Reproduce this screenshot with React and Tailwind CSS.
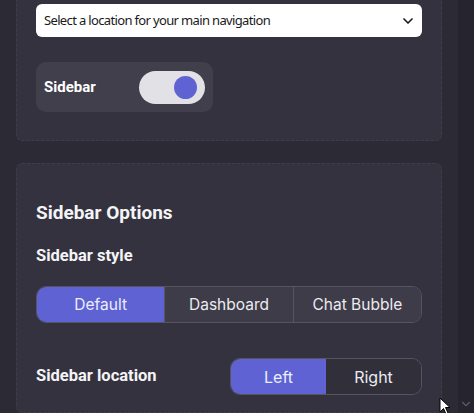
import { ChevronDown } from 'lucide-react';

function Segmented({ options, active, className }) {
    return (
        <div className={`flex overflow-hidden rounded-[10px] border border-[#55545f] ${className}`}>
            {options.map((opt, i) => (
                <div
                    key={opt}
                    className={`flex flex-1 items-center justify-center text-[15.5px] ${
                        i === active
                            ? 'bg-[#5f62d3] text-[#eceefb]'
                            : 'bg-[#3d3c48] text-[#ecebf0]'
                    } ${i > 0 ? 'border-l border-[#55545f]' : ''}`}
                >
                    {opt}
                </div>
            ))}
        </div>
    );
}

export default function App() {
    return (
        <div className="relative flex h-[413px] w-[474px] overflow-hidden bg-[#2b2a35] font-['Inter',sans-serif]">
            <div className="flex flex-1 flex-col px-4">
                {/* Navigation card */}
                <div className="-mt-4 rounded-md border border-dashed border-[#3e3d49] bg-[#33323e] px-[19px] pb-[28px] pt-[19px]">
                    <div className="flex h-[33px] items-center justify-between rounded-md bg-white pl-2 pr-[6px] font-['Noto_Sans',sans-serif] text-[13px] tracking-[-0.65px] text-[#1a1a1a]">
                        <span>Select a location for your main navigation</span>
                        <ChevronDown className="h-4 w-4" strokeWidth={2.5} />
                    </div>
                    <div className="mt-[25px] flex h-[50px] w-[177px] items-center justify-between rounded-[10px] bg-[#403f4b] pl-2 pr-2">
                        <span className="font-['Roboto',sans-serif] text-[15px] font-bold text-white">Sidebar</span>
                        <div className="flex h-[33px] w-[66px] items-center justify-end rounded-full bg-[#e2e1e5] pr-[8px]">
                            <div className="h-[23px] w-[23px] rounded-full bg-[#5f62d3]" />
                        </div>
                    </div>
                </div>

                {/* Sidebar options card */}
                <div className="mt-[22px] flex-1 rounded-md border border-dashed border-[#3e3d49] bg-[#33323e] px-[19px] pt-[38px] font-['Roboto',sans-serif]">
                    <h2 className="text-[19px] font-bold leading-[22px] text-[#f4f4f6]">Sidebar Options</h2>
                    <h3 className="mt-[22px] text-[16.5px] font-bold leading-5 text-[#f4f4f6]">Sidebar style</h3>
                    <Segmented
                        options={['Default', 'Dashboard', 'Chat Bubble']}
                        active={0}
                        className="mt-[20px] h-[37px] font-['Inter',sans-serif]"
                    />
                    <div className="mt-[35px] flex items-center justify-between">
                        <span className="text-[16.5px] font-bold text-[#f4f4f6]">Sidebar location</span>
                        <div className="flex h-[37px] w-[192px] overflow-hidden rounded-[10px] border border-[#55545f] font-['Inter',sans-serif] text-[16px]">
                            <div className="flex flex-1 items-center justify-center bg-[#5f62d3] text-[#eceefb]">Left</div>
                            <div className="flex flex-1 items-center justify-center bg-[#302f3a] text-[#ecebf0]">Right</div>
                        </div>
                    </div>
                </div>
            </div>

            {/* Scrollbar */}
            <div className="flex w-4 flex-col justify-end bg-[#26252f]">
                <ChevronDown className="mb-[2px] ml-[1px] h-[14px] w-[14px] text-[#5d5c66]" strokeWidth={2} />
            </div>

            {/* Mouse cursor */}
            <svg className="absolute left-[439px] top-[397px]" width="12" height="18" viewBox="0 0 12 18">
                <path d="M1 1 L1 15 L4.5 11.5 L7 17 L9 16 L6.5 10.5 L11 10.5 Z" fill="#fff" stroke="#000" strokeWidth="1" strokeLinejoin="round" />
            </svg>
        </div>
    );
}
